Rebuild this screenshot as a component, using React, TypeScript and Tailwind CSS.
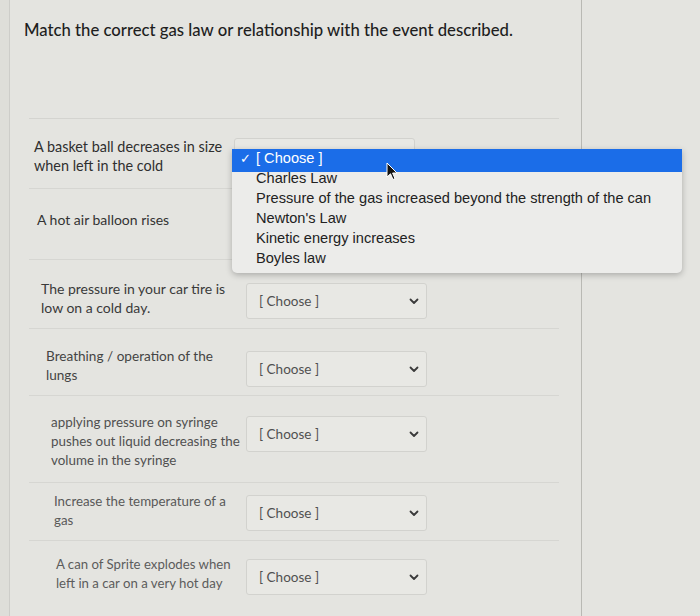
import React from 'react';

type Row = {
  lines: string[];
  height: string;
  pad: string;
  labelTop: string;
  selectTop: string;
  col: string;
  size: string;
  color: string;
};

const rows: Row[] = [
  { lines: ['A basket ball decreases in size', 'when left in the cold'], height: 'h-[70px]', pad: 'pl-[5px]', labelTop: 'mt-[18px]', selectTop: 'mt-[19px]', col: 'w-[205px]', size: 'text-[14.4px]', color: 'text-[#2f2f2f]' },
  { lines: ['A hot air balloon rises'], height: 'h-[71px]', pad: 'pl-[8px]', labelTop: 'mt-[21px]', selectTop: 'mt-[12px]', col: 'w-[217px]', size: 'text-[14px]', color: 'text-[#333333]' },
  { lines: ['The pressure in your car tire is', 'low on a cold day.'], height: 'h-[69px]', pad: 'pl-[12px]', labelTop: 'mt-[19px]', selectTop: 'mt-[23px]', col: 'w-[217px]', size: 'text-[14px]', color: 'text-[#3a3a3a]' },
  { lines: ['Breathing / operation of the', 'lungs'], height: 'h-[67px]', pad: 'pl-[17px]', labelTop: 'mt-[18px]', selectTop: 'mt-[22px]', col: 'w-[217px]', size: 'text-[13.6px]', color: 'text-[#444444]' },
  { lines: ['applying pressure on syringe', 'pushes out liquid decreasing the', 'volume in the syringe'], height: 'h-[87px]', pad: 'pl-[22px]', labelTop: 'mt-[17px]', selectTop: 'mt-[20px]', col: 'w-[217px]', size: 'text-[13.4px]', color: 'text-[#505050]' },
  { lines: ['Increase the temperature of a', 'gas'], height: 'h-[58px]', pad: 'pl-[25px]', labelTop: 'mt-[9px]', selectTop: 'mt-[12px]', col: 'w-[217px]', size: 'text-[13.3px]', color: 'text-[#595959]' },
  { lines: ['A can of Sprite explodes when', 'left in a car on a very hot day'], height: 'h-[76px]', pad: 'pl-[27px]', labelTop: 'mt-[14px]', selectTop: 'mt-[18px]', col: 'w-[217px]', size: 'text-[13.2px]', color: 'text-[#5c5c5c]' },
];

const options = [
  'Charles Law',
  'Pressure of the gas increased beyond the strength of the can',
  "Newton's Law",
  'Kinetic energy increases',
  'Boyles law',
];

const Chevron = () => (
  <svg width="10" height="7" viewBox="0 0 10 7" fill="none">
    <path d="M1.5 1.5 L5 5 L8.5 1.5" stroke="#3a3a3a" strokeWidth="1.8" strokeLinecap="round" strokeLinejoin="round" />
  </svg>
);

// hideText: the first two selects sit under the open menu
const SelectBox: React.FC<{ hideText?: boolean; top: string }> = ({ hideText, top }) => (
  <div className={`w-[181px] h-[36px] shrink-0 border border-[#d2d2ce] rounded-[3px] bg-[#e8e8e4] flex items-center justify-between pl-[12px] pr-[7px] ${top}`}>
    <span className="text-[13.5px] text-[#505050]">{hideText ? '' : '[ Choose ]'}</span>
    <Chevron />
  </div>
);

export default function App() {
  return (
    <div className="w-[700px] h-[616px] relative overflow-hidden bg-[#e4e4e0] font-['Lato','Noto_Sans',sans-serif]">
      <div className="flex h-full">
        <div className="w-[10px] h-full border-r border-[#cdcdc9] bg-[#deded9]" />
        <div className="w-[572px] h-full border-r border-[#b9b9b4]">
          {/* Title */}
          <div className="pt-[19px] pl-[14px] text-[16.7px] leading-[22px] font-medium text-[#1e1e1e]">
            Match the correct gas law or relationship with the event described.
          </div>
          <div className="mt-[77px] ml-[19px] w-[530px] border-b border-[#d4d4d0]" />

          {/* Rows */}
          {rows.map((row, i) => (
            <div key={i} className={`ml-[19px] w-[530px] flex items-start border-b border-[#d6d6d2] ${row.height}`}>
              <div className={`shrink-0 ${row.col} ${row.pad} ${row.labelTop} leading-[19px] whitespace-nowrap ${row.size} ${row.color}`}>
                {row.lines.map((l, j) => (
                  <div key={j}>{l}</div>
                ))}
              </div>
              <SelectBox hideText={i < 2} top={row.selectTop} />
            </div>
          ))}
        </div>
      </div>

      {/* Open dropdown menu */}
      <div className="absolute left-[232px] top-[149px] w-[450px] h-[124px] bg-[#ececea] rounded-b-[5px] shadow-[0_2px_6px_rgba(0,0,0,0.25)] font-['Liberation_Sans','Arial',sans-serif] text-[14.6px]">
        <div className="h-[23px] bg-[#1b6de8] text-white flex items-start">
          <div className="flex items-center h-[19px]">
            <span className="w-[24px] pl-[8px] text-[13px]">✓</span>
            <span>[ Choose ]</span>
          </div>
        </div>
        <div className="-mt-[4px]">
          {options.map((o) => (
            <div key={o} className="h-[20px] leading-[20px] pl-[24px] text-[#222222] whitespace-nowrap">
              {o}
            </div>
          ))}
        </div>
      </div>

      {/* Mouse cursor */}
      <svg className="absolute left-[386px] top-[162px]" width="12" height="19" viewBox="0 0 12 19">
        <path d="M1 1 L1 15 L4.5 11.8 L7 17.5 L9 16.6 L6.6 11 L11 11 Z" fill="#111" stroke="#fff" strokeWidth="1" strokeLinejoin="round" />
      </svg>
    </div>
  );
}
